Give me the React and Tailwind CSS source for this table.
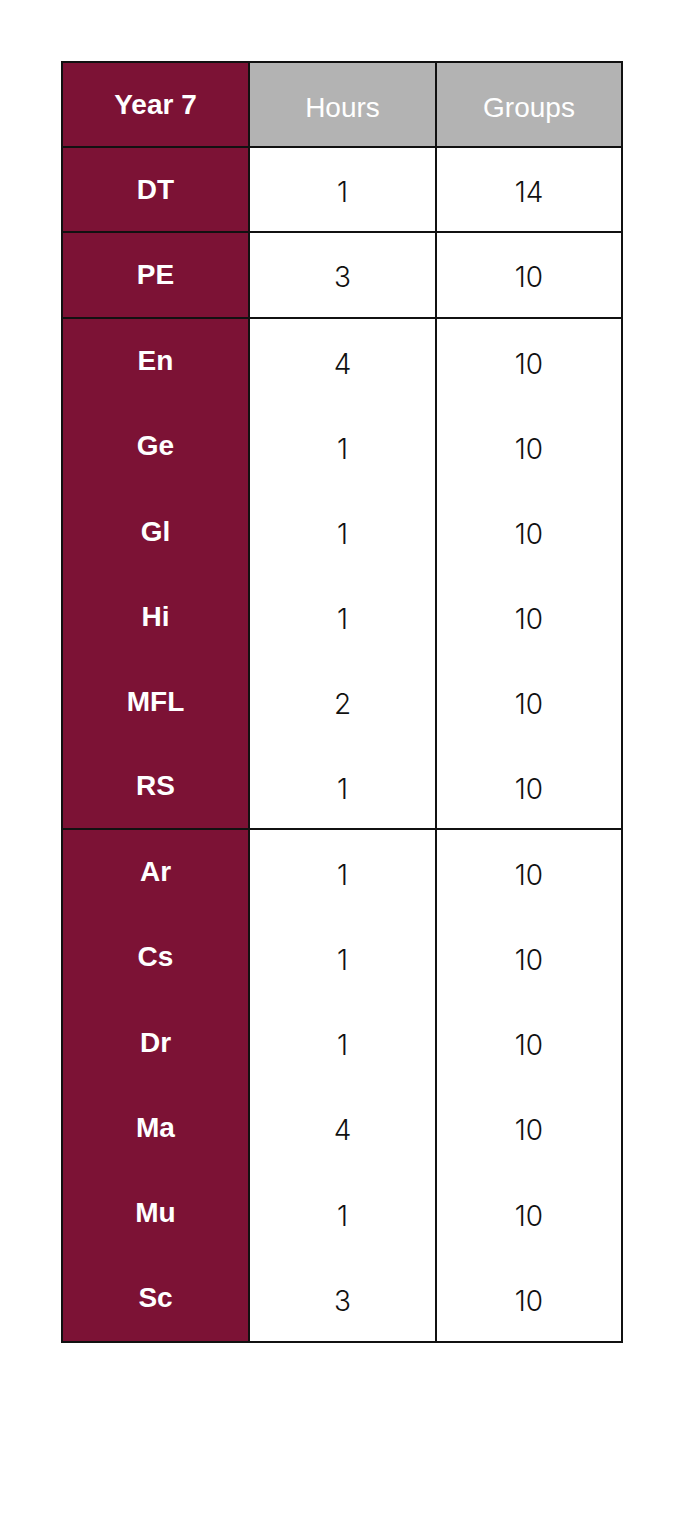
const sections = [
  [{ s: "DT", h: 1, g: 14 }],
  [{ s: "PE", h: 3, g: 10 }],
  [
    { s: "En", h: 4, g: 10 },
    { s: "Ge", h: 1, g: 10 },
    { s: "Gl", h: 1, g: 10 },
    { s: "Hi", h: 1, g: 10 },
    { s: "MFL", h: 2, g: 10 },
    { s: "RS", h: 1, g: 10 },
  ],
  [
    { s: "Ar", h: 1, g: 10 },
    { s: "Cs", h: 1, g: 10 },
    { s: "Dr", h: 1, g: 10 },
    { s: "Ma", h: 4, g: 10 },
    { s: "Mu", h: 1, g: 10 },
    { s: "Sc", h: 3, g: 10 },
  ],
];

const label = "text-white font-bold text-[28px] font-['Liberation_Sans',Arial,sans-serif]";
const num = "pt-[5px] text-[#111] font-light text-[28px] font-['Inter','Liberation_Sans',sans-serif]";
const head = "pt-[6px] bg-[#b3b3b3] text-white text-[28px] font-['Liberation_Sans',Arial,sans-serif]";

function Row({ r, last }) {
  return (
    <div className={`grid grid-cols-[187px_187px_1fr] h-[85.2px] ${last ? "border-b-2 border-[#111]" : ""}`}>
      <div className={`flex items-center justify-center bg-[#7c1235] border-r-2 border-[#111] ${label}`}>
        {r.s}
      </div>
      <div className={`flex items-center justify-center border-r-2 border-[#111] ${num}`}>{r.h}</div>
      <div className={`flex items-center justify-center ${num}`}>{r.g}</div>
    </div>
  );
}

export default function App() {
  return (
    <div className="w-[683px] h-[1536px] bg-white pt-[61px] pl-[61px]">
      <div className="w-[562px] border-2 border-[#111]">
        {/* Header */}
        <div className="grid grid-cols-[187px_187px_1fr] h-[85.2px] border-b-2 border-[#111]">
          <div className={`flex items-center justify-center bg-[#7c1235] border-r-2 border-[#111] ${label}`}>
            Year 7
          </div>
          <div className={`flex items-center justify-center border-r-2 border-[#111] ${head}`}>Hours</div>
          <div className={`flex items-center justify-center ${head}`}>Groups</div>
        </div>

        {sections.map((sec, i) =>
          sec.map((r, j) => (
            <Row key={r.s} r={r} last={i < sections.length - 1 && j === sec.length - 1} />
          ))
        )}
      </div>
    </div>
  );
}
